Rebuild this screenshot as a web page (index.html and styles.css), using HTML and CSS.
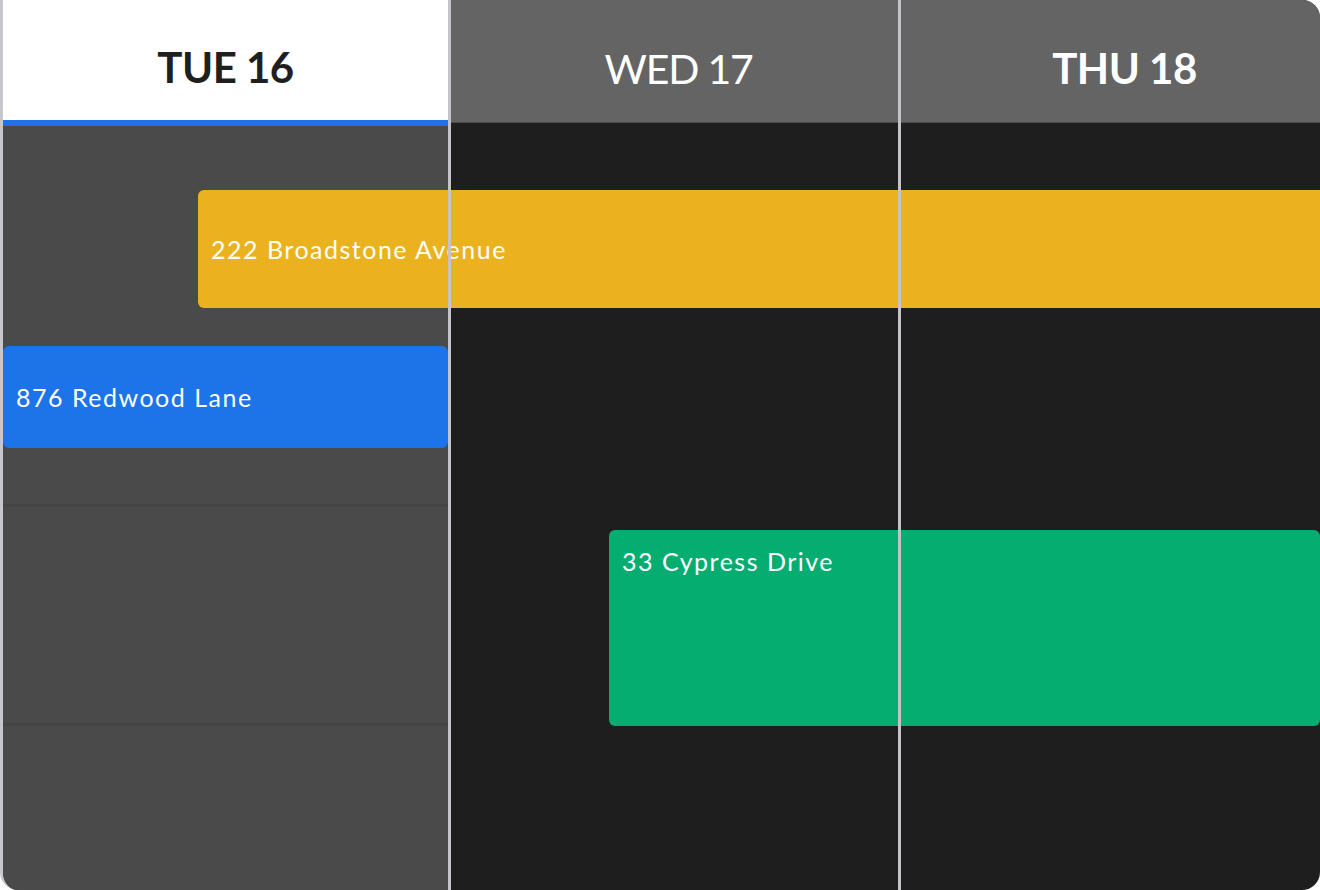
FILE: index.html
```html
<!DOCTYPE html>
<html lang="en">
<head>
    <meta charset="UTF-8">
    <meta name="viewport" content="width=device-width, initial-scale=1.0">
    <title>Schedule</title>
    <link rel="stylesheet" href="styles.css">
</head>
<body>
    <div class="calendar">
        <div class="day day-today">
            <div class="day-head">TUE 16</div>
            <div class="day-body">
                <div class="slot slot-a"></div>
                <div class="slot slot-b"></div>
                <div class="slot"></div>
            </div>
        </div>
        <div class="day day-wed">
            <div class="day-head">WED 17</div>
            <div class="day-body"></div>
        </div>
        <div class="day day-thu">
            <div class="day-head">THU 18</div>
            <div class="day-body"></div>
        </div>

        <div class="event event-yellow">222 Broadstone Avenue</div>
        <div class="event event-blue">876 Redwood Lane</div>
        <div class="event event-green">33 Cypress Drive</div>
    </div>
</body>
</html>
```

FILE: styles.css
```css
body {
    margin: 0;
    padding: 0;
    background: #fff;
    font-family: Lato, "Open Sans", sans-serif;
}

.calendar {
    position: relative;
    display: flex;
    width: 1317px;
    height: 890px;
    border-left: 3px solid #c7c6cb;
    border-radius: 0 18px 18px 18px;
    overflow: hidden;
    background: #1e1e1e;
}

.day {
    position: relative;
    display: flex;
    flex-direction: column;
    flex-shrink: 0;
}

.day + .day {
    margin-left: 3px;
}

/* column separators sit above the events */
.day + .day::before {
    content: "";
    position: absolute;
    top: 0;
    bottom: 0;
    left: -3px;
    width: 3px;
    background: #c4c4c8;
    z-index: 2;
}

.day-today { width: 445px; }
.day-wed { width: 447px; }
.day-thu { width: 447px; }

.day-head {
    height: 108px;
    padding-top: 14px;
    display: flex;
    align-items: center;
    justify-content: center;
    font-size: 41px;
    letter-spacing: -1.2px;
    color: #fff;
    background: #646464;
    border-bottom: 1px solid #4c4c4c;
}

.day-thu .day-head,
.day-today .day-head {
    font-size: 42px;
    font-weight: bold;
    letter-spacing: -0.5px;
}

.day-wed .day-head {
    padding-left: 8px;
}

.day-today .day-head {
    height: 106px;
    background: #fff;
    color: #1f1f1f;
    border-bottom: 6px solid #1d73e8;
}

.day-body {
    flex: 1;
    display: flex;
    flex-direction: column;
}

.day-today .day-body {
    background: #4a4a4a;
}

.slot {
    flex: 1;
}

.slot-a {
    flex: none;
    height: 378px;
    border-bottom: 3px solid #444;
}

.slot-b {
    flex: none;
    height: 216px;
    border-bottom: 3px solid #444;
}

.event {
    position: absolute;
    z-index: 1;
    box-sizing: border-box;
    display: flex;
    align-items: center;
    padding-left: 13px;
    border-radius: 6px;
    color: #fff;
    font-size: 25px;
    letter-spacing: 1.5px;
}

.event-yellow {
    left: 195px;
    top: 190px;
    width: 1140px;
    height: 118px;
    background: #eab21e;
}

.event-blue {
    left: 0;
    top: 346px;
    width: 445px;
    height: 102px;
    background: #1d73e8;
}

.event-green {
    left: 606px;
    top: 530px;
    width: 711px;
    height: 196px;
    align-items: flex-start;
    padding-top: 16px;
    background: #05ad71;
}
```
